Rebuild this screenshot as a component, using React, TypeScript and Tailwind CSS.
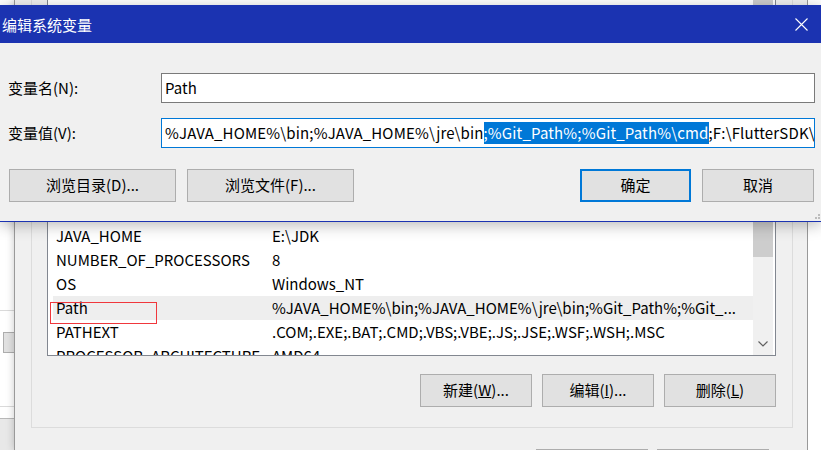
import React from 'react';

// System Properties > Environment Variables, with the "编辑系统变量" dialog on top
const FONT = "font-['Microsoft_YaHei','Noto_Sans_CJK_SC',sans-serif]";

const rows: [string, string][] = [
  ['JAVA_HOME', 'E:\\JDK'],
  ['NUMBER_OF_PROCESSORS', '8'],
  ['OS', 'Windows_NT'],
  ['Path', '%JAVA_HOME%\\bin;%JAVA_HOME%\\jre\\bin;%Git_Path%;%Git_...'],
  ['PATHEXT', '.COM;.EXE;.BAT;.CMD;.VBS;.VBE;.JS;.JSE;.WSF;.WSH;.MSC'],
  ['PROCESSOR_ARCHITECTURE', 'AMD64'],
];

const Btn = ({ children, w, primary }: { children: React.ReactNode; w: string; primary?: boolean }) => (
  <button
    className={
      primary
        ? `${w} h-[33px] shrink-0 bg-[#e1e1e1] border-2 border-[#0078d7] text-[15px] text-black flex items-center justify-center`
        : `${w} h-[33px] shrink-0 bg-[#e1e1e1] border border-[#adadad] text-[15px] text-black flex items-center justify-center`
    }
  >
    {children}
  </button>
);

const EditDialog = () => (
  <div className="absolute left-0 top-[5px] w-[821px] h-[217px] flex flex-col bg-[#f0f0f0] border-b border-[#1b33b1] shadow-[0_3px_14px_rgba(0,0,0,0.28)]">
    {/* Title bar */}
    <div className="h-[38px] shrink-0 bg-[#1b33b1] flex items-center justify-between pl-[2px] pr-[13px]">
      <span className="text-[15px] text-white leading-none">编辑系统变量</span>
      <svg width="13" height="13" viewBox="0 0 13 13" className="text-white">
        <path d="M0.5 0.5 L12.5 12.5 M12.5 0.5 L0.5 12.5" stroke="currentColor" strokeWidth="1.1" fill="none" />
      </svg>
    </div>

    {/* Name */}
    <div className="flex items-center mt-[30px]">
      <span className="w-[161px] pl-[8px] text-[15px] text-black">变量名(N):</span>
      <div className="w-[654px] h-[30px] bg-white border border-[#7a7a7a] flex items-center pl-[3px] text-[15px] text-black">
        Path
      </div>
    </div>

    {/* Value */}
    <div className="flex items-center mt-[15px]">
      <span className="w-[161px] pl-[8px] text-[15px] text-black">变量值(V):</span>
      <div className="w-[654px] h-[30px] bg-white border border-[#0078d7] flex items-center pl-[3px] text-[15px] tracking-[0.16px] text-black overflow-hidden whitespace-nowrap">
        <span>%JAVA_HOME%\bin;%JAVA_HOME%\jre\bin</span>
        <span className="bg-[#0078d7] text-white">;%Git_Path%;%Git_Path%\cmd</span>
        <span>;F:\FlutterSDK\</span>
      </div>
    </div>

    {/* Buttons */}
    <div className="flex items-center mt-[21px] pl-[9px] pr-[7px]">
      <div className="flex gap-[11px]">
        <Btn w="w-[167px]">浏览目录(D)...</Btn>
        <Btn w="w-[167px]">浏览文件(F)...</Btn>
      </div>
      <div className="flex gap-[11px] ml-auto">
        <Btn w="w-[111px]" primary>确定</Btn>
        <Btn w="w-[112px]">取消</Btn>
      </div>
    </div>

    {/* Size grip */}
    <div className="absolute right-[1px] bottom-[2px] grid grid-cols-3 gap-[1px]">
      <span className="w-[2px] h-[2px]" />
      <span className="w-[2px] h-[2px]" />
      <span className="w-[2px] h-[2px] bg-[#bcbcbc]" />
      <span className="w-[2px] h-[2px]" />
      <span className="w-[2px] h-[2px] bg-[#bcbcbc]" />
      <span className="w-[2px] h-[2px] bg-[#bcbcbc]" />
    </div>
  </div>
);

const EnvWindow = () => (
  <div className="w-[794px] shrink-0 h-full bg-[#f0f0f0] border-x border-[#999999] shadow-[0_0_8px_rgba(0,0,0,0.22)] flex flex-col pl-[16px] pr-[14px]">
    {/* 系统变量 group */}
    <div className="h-[428px] shrink-0 border-x border-b border-[#dcdcdc] flex flex-col">
      <div className="relative ml-[15px] mr-[16px] h-[356px] bg-white border-x border-b border-[#828790] flex">
        <div className="flex-1 pt-[224px] overflow-hidden">
          {rows.map(([name, value]) => (
            <div
              key={name}
              className={
                name === 'Path'
                  ? 'h-[24px] ml-[5px] flex items-center bg-[#eeeeee] text-[15px] text-black whitespace-nowrap'
                  : 'h-[24px] ml-[5px] flex items-center text-[15px] text-black whitespace-nowrap'
              }
            >
              <span className="w-[219px] pl-[3px] shrink-0">{name}</span>
              <span>{value}</span>
            </div>
          ))}
        </div>
        {/* scrollbar */}
        <div className="w-[20px] mr-[2px] bg-[#f0f0f0] flex flex-col">
          <div className="h-[257px] bg-[#cdcdcd]" />
          <div className="flex-1 flex items-end justify-center pb-[8px]">
            <svg width="10" height="6" viewBox="0 0 10 6">
              <path d="M0.5 0.5 L5 5 L9.5 0.5" stroke="#606060" strokeWidth="1.2" fill="none" />
            </svg>
          </div>
        </div>
        {/* red annotation box */}
        <div className="absolute left-[2px] top-[302px] w-[107px] h-[22px] border border-[#f0373c]" />
      </div>

      <div className="flex justify-end gap-[10px] mt-[18px] pr-[16px]">
        <Btn w="w-[112px]">新建(<span className="underline">W</span>)...</Btn>
        <Btn w="w-[112px]">编辑(<span className="underline">I</span>)...</Btn>
        <Btn w="w-[112px]">删除(<span className="underline">L</span>)</Btn>
      </div>
    </div>

    {/* 确定 / 取消 of environment window */}
    <div className="flex justify-end gap-[9px] mt-[21px] pr-[24px]">
      <div className="w-[112px] h-[33px] bg-[#e1e1e1] border border-[#adadad]" />
      <div className="w-[112px] h-[33px] bg-[#e1e1e1] border border-[#adadad]" />
    </div>
  </div>
);

export default function App() {
  return (
    <div className={`${FONT} relative w-[821px] h-[450px] overflow-hidden bg-white flex`}>
      {/* window further behind, left edge */}
      <div className="w-[14px] shrink-0 flex flex-col bg-white">
        <div className="h-[311px] shrink-0 border-b border-[#dadada]" />
        <div className="h-[21px] shrink-0" />
        <div className="h-[21px] shrink-0 ml-[3px] bg-[#e1e1e1] border-y border-l border-[#adadad]" />
        <div className="h-[54px] shrink-0 border-b border-[#dadada]" />
        <div className="h-[12px] shrink-0 border-b border-[#b8b8b8]" />
        <div className="flex-1 bg-[#e8e8e8]" />
      </div>
      <EnvWindow />
      <div className="flex-1 bg-white" />
      <EditDialog />
    </div>
  );
}
